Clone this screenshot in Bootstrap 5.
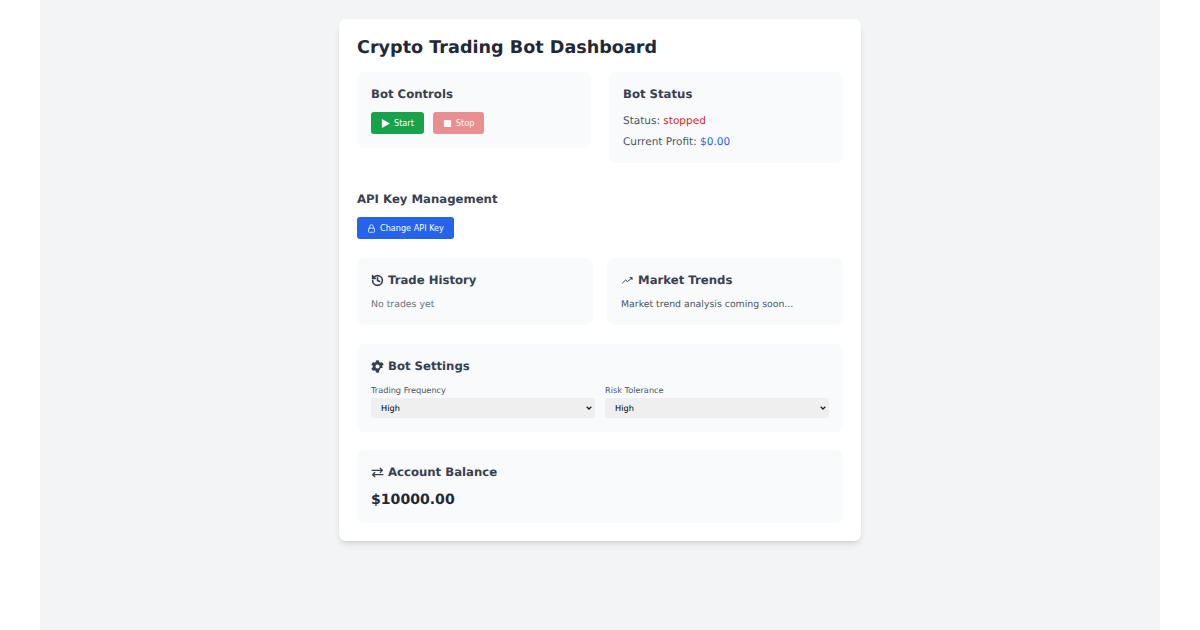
<!DOCTYPE html>
<html lang="en">
<head>
    <meta charset="UTF-8">
    <meta name="viewport" content="width=device-width, initial-scale=1.0">
    <title>Crypto Trading Bot Dashboard</title>
    <link href="https://cdn.jsdelivr.net/npm/bootstrap@5.3.0/dist/css/bootstrap.min.css" rel="stylesheet">
    <style>
        body {
            font-family: "DejaVu Sans", sans-serif;
            text-rendering: geometricPrecision;
            background: #fff;
            height: 630px;
            overflow: hidden;
        }

        .page-wrap {
            width: 1120px;
            height: 630px;
            margin: 0 auto;
            padding-top: 19px;
            background: #f3f4f6;
        }

        .dash-card {
            width: 522px;
            height: 522px;
            margin: 0 auto;
            padding: 18px;
            background: #fff;
            border-radius: 7px;
            box-shadow: 0 4px 6px -1px rgba(0, 0, 0, .1), 0 2px 4px -2px rgba(0, 0, 0, .1);
        }

        .dash-title {
            margin: 0 0 14px;
            height: 21px;
            font-size: 17.6px;
            line-height: 23px;
            font-weight: 700;
            color: #1f2937;
        }

        .panel-box {
            background: #f9fafb;
            border-radius: 7px;
            padding: 14px;
        }

        .top-row {
            gap: 18px;
            height: 91px;
            margin-bottom: 28px;
        }

        .top-row .panel-box {
            width: 234px;
        }

        .btn-row {
            gap: 9px;
        }

        .mid-row {
            gap: 14px;
            margin-top: 19px;
            margin-bottom: 19px;
        }

        .mid-row .panel-box {
            width: 236px;
            height: 67px;
        }

        .settings-box {
            height: 88px;
            margin-bottom: 18px;
        }

        .panel-head {
            margin: 0 0 9px;
            font-size: 11.7px;
            line-height: 17px;
            font-weight: 700;
            color: #374151;
        }

        .panel-head svg {
            flex: none;
        }

        .status-list {
            padding-top: 2px;
        }

        .status-line {
            margin: 0 0 7px;
            font-size: 10.5px;
            line-height: 14px;
            color: #4b5563;
        }

        .status-line:last-child {
            margin-bottom: 0;
        }

        .status-stopped {
            color: #dc2626;
        }

        .status-profit {
            color: #2563eb;
        }

        .act-btn {
            display: flex;
            align-items: center;
            gap: 4px;
            width: fit-content;
            height: 22px;
            padding: 0 10px;
            border: 0;
            border-radius: 3px;
            color: #fff;
            font-size: 8.15px;
            line-height: 1;
        }

        .act-start {
            background: #16a34a;
        }

        .act-stop {
            background: #dc2626;
            opacity: .5;
        }

        .act-key {
            background: #2563eb;
        }

        .note-text {
            margin: 0;
            font-size: 9.35px;
            line-height: 14px;
            color: #4b5563;
        }

        .note-muted {
            color: #6b7280;
        }

        .select-row {
            gap: 10px;
        }

        .select-col {
            width: 224px;
        }

        .select-col label {
            display: block;
            margin: 0 0 1px;
            font-size: 8.2px;
            line-height: 13px;
            color: #4b5563;
        }

        .select-col select {
            display: block;
            width: 100%;
            height: 20px;
            padding: 0 10px;
            border: 0;
            border-radius: 3px;
            background: #efefef url("data:image/svg+xml,%3Csvg xmlns='http://www.w3.org/2000/svg' width='6' height='4' viewBox='0 0 6 4'%3E%3Cpath d='M.7.7 3 3l2.3-2.3' fill='none' stroke='%23222' stroke-width='1.3'/%3E%3C/svg%3E") no-repeat right 3px center;
            appearance: none;
            color: #000;
            font-family: inherit;
            font-size: 8.2px;
            text-rendering: geometricPrecision;
        }

        .balance-num {
            margin: 0;
            height: 19px;
            font-size: 14.08px;
            line-height: 21px;
            font-weight: 700;
            color: #1f2937;
        }
    </style>
</head>
<body>
    <div class="page-wrap">
        <div class="dash-card">
            <h1 class="dash-title">Crypto Trading Bot Dashboard</h1>

            <div class="d-flex align-items-start top-row">
                <div class="panel-box">
                    <h2 class="panel-head">Bot Controls</h2>
                    <div class="d-flex btn-row">
                        <button class="act-btn act-start" type="button">
                            <svg width="9" height="9" viewBox="0 0 10 10"><path d="M1 0l9 5-9 5z" fill="#fff"/></svg>Start
                        </button>
                        <button class="act-btn act-stop" type="button">
                            <svg width="9" height="9" viewBox="0 0 10 10"><rect x="1" y="1" width="8" height="8" rx="1" fill="#fff"/></svg>Stop
                        </button>
                    </div>
                </div>
                <div class="panel-box">
                    <h2 class="panel-head">Bot Status</h2>
                    <div class="status-list">
                        <p class="status-line">Status: <span class="status-stopped">stopped</span></p>
                        <p class="status-line">Current Profit: <span class="status-profit">$0.00</span></p>
                    </div>
                </div>
            </div>

            <h2 class="panel-head">API Key Management</h2>
            <button class="act-btn act-key" type="button">
                <svg width="9" height="9" viewBox="0 0 24 24" fill="none" stroke="#fff" stroke-width="2" stroke-linecap="round" stroke-linejoin="round"><rect x="4" y="11" width="16" height="11" rx="2"/><path d="M7 11V7a5 5 0 0 1 10 0v4"/></svg>Change API Key
            </button>

            <div class="d-flex mid-row">
                <div class="panel-box">
                    <h2 class="panel-head d-flex align-items-center gap-1">
                        <svg width="13" height="13" viewBox="0 0 24 24" fill="none" stroke="#374151" stroke-width="3" stroke-linecap="round" stroke-linejoin="round"><path d="M3 12a9 9 0 1 0 9-9 9.75 9.75 0 0 0-6.74 2.74L3 8"/><path d="M3 3v5h5" fill="#374151"/><path d="M12 7v5l4 2"/></svg>
                        Trade History
                    </h2>
                    <p class="note-text note-muted">No trades yet</p>
                </div>
                <div class="panel-box">
                    <h2 class="panel-head d-flex align-items-center gap-1">
                        <svg width="13" height="13" viewBox="0 0 13 13" fill="none" stroke="#374151" stroke-width="1" stroke-linecap="round" stroke-linejoin="round"><path d="M1.5 9l3-3 2 1.5 4.5-3.5"/><path d="M9 3.6h2v2"/></svg>
                        Market Trends
                    </h2>
                    <p class="note-text">Market trend analysis coming soon...</p>
                </div>
            </div>

            <div class="panel-box settings-box">
                <h2 class="panel-head d-flex align-items-center gap-1">
                    <svg width="13" height="13" viewBox="0 0 512 512"><path fill="#374151" d="M487 316l-42-25a190 190 0 0 0 0-70l42-25c5-3 7-8 5-14a247 247 0 0 0-54-94c-4-4-10-5-15-2l-42 25a190 190 0 0 0-61-35V27c0-6-4-10-9-11a249 249 0 0 0-110 0c-5 1-9 5-9 11v49a190 190 0 0 0-61 35L89 86c-5-3-11-2-15 2a247 247 0 0 0-54 94c-2 6 0 11 5 14l42 25a190 190 0 0 0 0 70l-42 25c-5 3-7 8-5 14a247 247 0 0 0 54 94c4 4 10 5 15 2l42-25a190 190 0 0 0 61 35v49c0 6 4 10 9 11a249 249 0 0 0 110 0c5-1 9-5 9-11v-49a190 190 0 0 0-61-35l42 25c5 3 11 2 15-2a247 247 0 0 0 54-94c2-6 0-11-5-14zM256 336a80 80 0 1 1 0-160 80 80 0 0 1 0 160z"/></svg>
                    Bot Settings
                </h2>
                <div class="d-flex select-row">
                    <div class="select-col">
                        <label for="tradeFreq">Trading Frequency</label>
                        <select id="tradeFreq"><option>High</option><option>Medium</option><option>Low</option></select>
                    </div>
                    <div class="select-col">
                        <label for="riskTol">Risk Tolerance</label>
                        <select id="riskTol"><option>High</option><option>Medium</option><option>Low</option></select>
                    </div>
                </div>
            </div>

            <div class="panel-box">
                <h2 class="panel-head d-flex align-items-center gap-1">
                    <svg width="13" height="13" viewBox="0 0 24 24" fill="none" stroke="#374151" stroke-width="2.4" stroke-linecap="round" stroke-linejoin="round"><path d="M2 8h19M17 4l4 4-4 4"/><path d="M22 16H3M7 12l-4 4 4 4"/></svg>
                    Account Balance
                </h2>
                <p class="balance-num">$10000.00</p>
            </div>
        </div>
    </div>

    <script src="https://cdn.jsdelivr.net/npm/bootstrap@5.3.0/dist/js/bootstrap.bundle.min.js"></script>
</body>
</html>
